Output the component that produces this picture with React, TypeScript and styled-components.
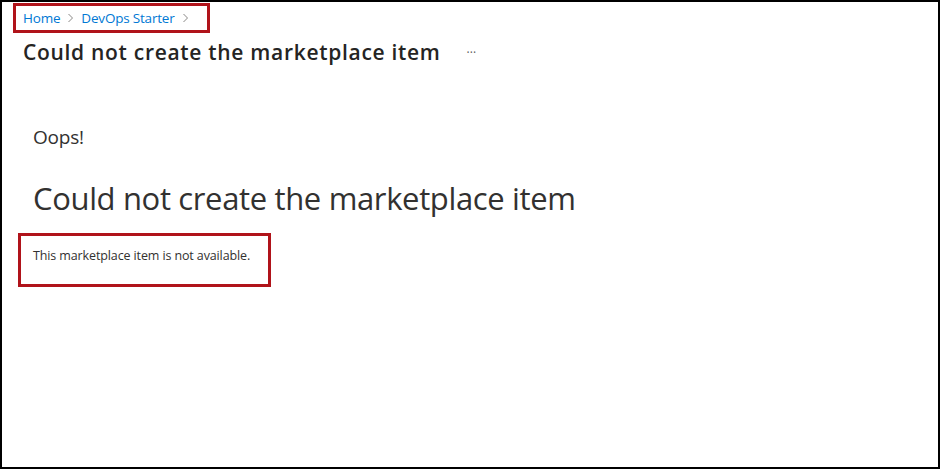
import React from "react";
import styled, { createGlobalStyle } from "styled-components";

const Global = createGlobalStyle`
  html, body { margin: 0; padding: 0; background: #ffffff; }
  body { font-family: "Open Sans", "Noto Sans", "Liberation Sans", sans-serif; color: #323130; }
  * { box-sizing: border-box; }
`;

const Frame = styled.div`
  width: 940px;
  height: 469px;
  border: 2px solid #000000;
  background: #ffffff;
  display: flex;
  flex-direction: column;
  overflow: hidden;
`;

const Header = styled.header`
  display: flex;
  flex-direction: column;
  padding-left: 11px;
  padding-top: 1px;
`;

const Breadcrumb = styled.nav`
  display: flex;
  align-items: center;
  width: 197px;
  height: 30px;
  border: 3px solid #b0131a;
  padding: 0 0 0 7px;
  gap: 7px;
  font-size: 13.5px;
  letter-spacing: -0.2px;
`;

const Crumb = styled.a`
  color: #0078d4;
  text-decoration: none;
  white-space: nowrap;
`;

const Chevron = () => (
  <svg width="7" height="10" viewBox="0 0 7 10" aria-hidden="true">
    <path d="M1.5 1 L5.5 5 L1.5 9" fill="none" stroke="#8a8886" strokeWidth="1" />
  </svg>
);

const TitleRow = styled.div`
  display: flex;
  align-items: center;
  padding-left: 10px;
  margin-top: 3px;
  height: 32px;
`;

const PageTitle = styled.h1`
  margin: 0;
  font-size: 21px;
  font-weight: 600;
  letter-spacing: 0.7px;
  color: #252423;
  white-space: nowrap;
`;

const More = styled.button`
  border: none;
  background: transparent;
  margin-left: 22px;
  padding: 0 4px;
  font-size: 12px;
  color: #605e5c;
  font-family: inherit;
  line-height: 1;
  letter-spacing: 0px;
  position: relative;
  top: 1px;
`;

const Content = styled.main`
  display: flex;
  flex-direction: column;
  padding-left: 16px;
  padding-top: 55px;
`;

const Oops = styled.div`
  padding-left: 15px;
  font-size: 19px;
  font-weight: 400;
  line-height: 28px;
  letter-spacing: -0.2px;
  color: #323130;
`;

const BigHeading = styled.h2`
  margin: 27px 0 0 0;
  padding-left: 15px;
  font-size: 31px;
  font-weight: 400;
  line-height: 40px;
  letter-spacing: -0.35px;
  color: #323130;
  white-space: nowrap;
`;

const MessageBox = styled.div`
  width: 253px;
  height: 54px;
  margin-top: 15px;
  border: 3px solid #b0131a;
  padding: 11px 0 0 12px;
  font-size: 12.5px;
  letter-spacing: -0.12px;
  color: #323130;
  white-space: nowrap;
`;

export default function App() {
  return (
    <>
      <Global />
      <Frame>
        <Header>
          <Breadcrumb aria-label="Breadcrumb">
            <Crumb href="#">Home</Crumb>
            <Chevron />
            <Crumb href="#">DevOps Starter</Crumb>
            <Chevron />
          </Breadcrumb>
          <TitleRow>
            <PageTitle>Could not create the marketplace item</PageTitle>
            <More aria-label="More">···</More>
          </TitleRow>
        </Header>
        <Content>
          <Oops>Oops!</Oops>
          <BigHeading>Could not create the marketplace item</BigHeading>
          <MessageBox>This marketplace item is not available.</MessageBox>
        </Content>
      </Frame>
    </>
  );
}
